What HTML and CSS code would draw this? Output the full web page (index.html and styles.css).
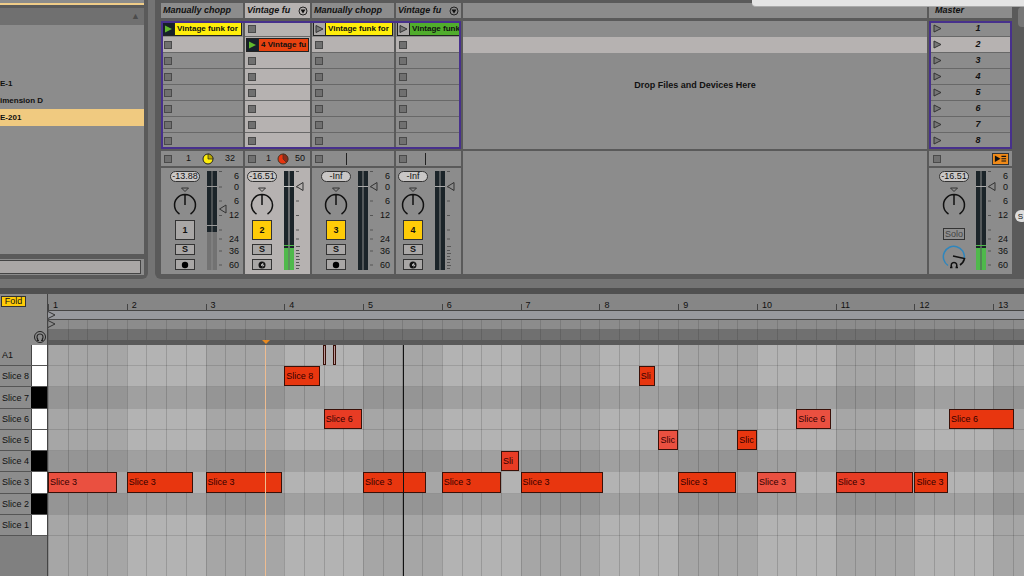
FILE: index.html
```html
<!DOCTYPE html>
<html lang="en">
<head>
  <meta charset="UTF-8" />
  <meta name="viewport" content="width=device-width, initial-scale=1.0" />
  <title>Live Set</title>
  <link rel="stylesheet" href="styles.css">
</head>
<body>
  <!-- Shared icons -->
  <svg class="defs" width="0" height="0" aria-hidden="true">
    <symbol id="play" viewBox="0 0 9 9"><path d="M1 1 L8 4.5 L1 8 Z" /></symbol>
    <symbol id="knob" viewBox="0 0 24 30">
      <path d="M8.5 2 H15.500 L12 5.500 Z" fill="none" stroke="#333" />
      <path d="M6.500 28 A10.500 10.500 0 1 1 17.500 28 M12 19 V9" fill="none" stroke="#111" stroke-width="1.500" />
    </symbol>
    <symbol id="ticks" viewBox="0 0 4 99">
      <path d="M0 .5H3M0 16H3M0 30H3M0 44.500H3M0 59H3M0 68H3M0 80H3M0 94H3" stroke="#555" />
    </symbol>
    <symbol id="ticks-fine" viewBox="0 0 4 99">
      <path d="M0 .5H3M0 16H3M0 30H3M0 44.500H3M0 59H3M0 68H3M0 75.500H4M0 79.500H3M0 82.500H4M0 85.500H3M0 88.500H4M0 91.500H3M0 94.500H4M0 97.500H3" stroke="#555" />
    </symbol>
    <symbol id="midi" viewBox="0 0 8 8">
      <circle cx="4" cy="4" r="3.500" fill="#111" /><path d="M5.500 1.500 L3 3.500 V5 L5 4.500 L4 7 L6.500 4 L5 3.500 Z" fill="#bbb" />
    </symbol>
    <symbol id="phones" viewBox="0 0 14 14">
      <circle cx="7" cy="7" r="5.500" fill="none" stroke="#222" />
      <path d="M5 10 C3 7 4 4 7 4 C10 4 11 7 9 10 M4.500 8 V10.500 H6 M9.500 8 V10.500 H8" fill="none" stroke="#222" stroke-width="1.200" />
    </symbol>
    <symbol id="menu" viewBox="0 0 10 10">
      <circle cx="5" cy="5" r="4" fill="none" stroke="#222" /><path d="M2.500 3.500 H7.500 L5 7.500 Z" fill="#111" />
    </symbol>
  </svg>

  <div class="top">
    <aside class="browser">
      <div class="browser-strip"></div>
      <div class="browser-head">▲</div>
      <ul class="browser-list">
        <li>E-1</li>
        <li>imension D</li>
        <li class="selected">E-201</li>
      </ul>
      <div class="browser-foot"><input type="text" class="browser-input" aria-label="Info" /></div>
    </aside>

    <main class="session">
      <section class="tracks">
        <div class="row heads">
          <div class="head">Manually chopp</div>
          <div class="head light">Vintage fu <svg class="menu"><use href="#menu" /></svg></div>
          <div class="head">Manually chopp</div>
          <div class="head">Vintage fu <svg class="menu"><use href="#menu" /></svg></div>
        </div>

        <div class="row slots">
          <div class="track">
            <button class="slot clip yellow playing"><svg class="play"><use href="#play" /></svg><span>Vintage funk for</span></button>
            <button class="slot scene" aria-label="Stop"><i class="stop"></i></button>
            <button class="slot" aria-label="Stop"><i class="stop"></i></button>
            <button class="slot" aria-label="Stop"><i class="stop"></i></button>
            <button class="slot" aria-label="Stop"><i class="stop"></i></button>
            <button class="slot" aria-label="Stop"><i class="stop"></i></button>
            <button class="slot" aria-label="Stop"><i class="stop"></i></button>
            <button class="slot" aria-label="Stop"><i class="stop"></i></button>
          </div>
          <div class="track light">
            <button class="slot" aria-label="Stop"><i class="stop"></i></button>
            <button class="slot clip red playing"><svg class="play"><use href="#play" /></svg><span>4 Vintage fu</span></button>
            <button class="slot" aria-label="Stop"><i class="stop"></i></button>
            <button class="slot" aria-label="Stop"><i class="stop"></i></button>
            <button class="slot" aria-label="Stop"><i class="stop"></i></button>
            <button class="slot" aria-label="Stop"><i class="stop"></i></button>
            <button class="slot" aria-label="Stop"><i class="stop"></i></button>
            <button class="slot" aria-label="Stop"><i class="stop"></i></button>
          </div>
          <div class="track">
            <button class="slot clip yellow"><svg class="play"><use href="#play" /></svg><span>Vintage funk for</span></button>
            <button class="slot scene" aria-label="Stop"><i class="stop"></i></button>
            <button class="slot" aria-label="Stop"><i class="stop"></i></button>
            <button class="slot" aria-label="Stop"><i class="stop"></i></button>
            <button class="slot" aria-label="Stop"><i class="stop"></i></button>
            <button class="slot" aria-label="Stop"><i class="stop"></i></button>
            <button class="slot" aria-label="Stop"><i class="stop"></i></button>
            <button class="slot" aria-label="Stop"><i class="stop"></i></button>
          </div>
          <div class="track">
            <button class="slot clip green"><svg class="play"><use href="#play" /></svg><span>Vintage funk</span></button>
            <button class="slot scene" aria-label="Stop"><i class="stop"></i></button>
            <button class="slot" aria-label="Stop"><i class="stop"></i></button>
            <button class="slot" aria-label="Stop"><i class="stop"></i></button>
            <button class="slot" aria-label="Stop"><i class="stop"></i></button>
            <button class="slot" aria-label="Stop"><i class="stop"></i></button>
            <button class="slot" aria-label="Stop"><i class="stop"></i></button>
            <button class="slot" aria-label="Stop"><i class="stop"></i></button>
          </div>
        </div>

        <div class="row status">
          <div class="state">
            <i class="stop"></i><span class="count">1</span>
            <svg class="pie" viewBox="0 0 12 12"><circle cx="6" cy="6" r="5" fill="#ffee0a" stroke="#222" /><path d="M6 6 V1 A5 5 0 0 1 11 6 Z" fill="#b9a800" stroke="#222" stroke-width=".7" /></svg>
            <span>32</span>
          </div>
          <div class="state narrow">
            <i class="stop"></i><span class="count">1</span>
            <svg class="pie" viewBox="0 0 12 12"><circle cx="6" cy="6" r="5" fill="#e8340f" stroke="#432" /><path d="M6 6 V1 A5 5 0 0 1 9.500 9.500 Z" fill="#8f2a1a" stroke="#432" stroke-width=".7" /></svg>
            <span>50</span>
          </div>
          <div class="state"><i class="stop"></i><i class="bar-mark"></i></div>
          <div class="state narrow"><i class="stop"></i><i class="bar-mark"></i></div>
        </div>

        <div class="row mixers">
          <div class="mixer">
            <div class="controls">
              <output class="peak">-13.88</output>
              <svg class="knob"><use href="#knob" /></svg>
              <button class="number">1</button>
              <button class="small">S</button>
              <button class="small" aria-label="Arm"><svg viewBox="0 0 8 8"><circle cx="4" cy="4" r="3.200" /></svg></button>
            </div>
            <svg class="meter" viewBox="0 0 22 99">
              <path d="M0 0H4.500V99H0ZM5.500 0H10V99H5.500Z" fill="#727272" />
              <path d="M0 0H4.500V61H0ZM5.500 0H10V61H5.500Z" fill="#1b2429" />
              <path d="M0 15.500H10M0 54.500H10" stroke="#999" />
              <use href="#ticks" x="12" width="4" height="99" />
              <path d="M19 34 V42 L12.500 38 Z" fill="#8b8b8b" stroke="#333" />
            </svg>
            <ul class="scale"><li>6</li><li>0</li><li>6</li><li>12</li><li>24</li><li>36</li><li>60</li></ul>
          </div>

          <div class="mixer narrow light">
            <div class="controls">
              <output class="peak">-16.51</output>
              <svg class="knob"><use href="#knob" /></svg>
              <button class="number on">2</button>
              <button class="small">S</button>
              <button class="small" aria-label="Arm"><svg><use href="#midi" /></svg></button>
            </div>
            <svg class="meter" viewBox="0 0 22 99">
              <path d="M0 0H4.500V99H0ZM5.500 0H10V99H5.500Z" fill="#1b2429" />
              <path d="M0 77H4.500V99H0ZM5.500 77H10V99H5.500Z" fill="#4fb94b" />
              <path d="M0 15.500H10" stroke="#ccc" /><path d="M0 74.500H10" stroke="#4fb94b" />
              <use href="#ticks-fine" x="12" width="4" height="99" />
              <path d="M19 11.500 V19.500 L12.500 15.500 Z" fill="#b5b1b0" stroke="#333" />
            </svg>
          </div>

          <div class="mixer">
            <div class="controls">
              <output class="peak">-Inf</output>
              <svg class="knob"><use href="#knob" /></svg>
              <button class="number on">3</button>
              <button class="small">S</button>
              <button class="small" aria-label="Arm"><svg viewBox="0 0 8 8"><circle cx="4" cy="4" r="3.200" /></svg></button>
            </div>
            <svg class="meter" viewBox="0 0 22 99">
              <path d="M0 0H4.500V99H0ZM5.500 0H10V99H5.500Z" fill="#1b2429" />
              <path d="M0 15.500H10" stroke="#aaa" />
              <use href="#ticks" x="12" width="4" height="99" />
              <path d="M19 11.500 V19.500 L12.500 15.500 Z" fill="#8b8b8b" stroke="#333" />
            </svg>
            <ul class="scale"><li>6</li><li>0</li><li>6</li><li>12</li><li>24</li><li>36</li><li>60</li></ul>
          </div>

          <div class="mixer narrow">
            <div class="controls">
              <output class="peak">-Inf</output>
              <svg class="knob"><use href="#knob" /></svg>
              <button class="number on">4</button>
              <button class="small">S</button>
              <button class="small" aria-label="Arm"><svg><use href="#midi" /></svg></button>
            </div>
            <svg class="meter" viewBox="0 0 22 99">
              <path d="M0 0H4.500V99H0ZM5.500 0H10V99H5.500Z" fill="#1b2429" />
              <path d="M0 15.500H10" stroke="#aaa" />
              <use href="#ticks-fine" x="12" width="4" height="99" />
              <path d="M19 11.500 V19.500 L12.500 15.500 Z" fill="#8b8b8b" stroke="#333" />
            </svg>
          </div>
        </div>
      </section>

      <section class="drop">
        <div class="drop-head"></div>
        <div class="drop-area">Drop Files and Devices Here</div>
        <div class="drop-foot"></div>
      </section>

      <section class="master">
        <div class="head">Master</div>
        <div class="scenes">
          <button class="slot"><svg class="play"><use href="#play" /></svg><span>1</span></button>
          <button class="slot scene"><svg class="play"><use href="#play" /></svg><span>2</span></button>
          <button class="slot"><svg class="play"><use href="#play" /></svg><span>3</span></button>
          <button class="slot"><svg class="play"><use href="#play" /></svg><span>4</span></button>
          <button class="slot"><svg class="play"><use href="#play" /></svg><span>5</span></button>
          <button class="slot"><svg class="play"><use href="#play" /></svg><span>6</span></button>
          <button class="slot"><svg class="play"><use href="#play" /></svg><span>7</span></button>
          <button class="slot"><svg class="play"><use href="#play" /></svg><span>8</span></button>
        </div>
        <div class="state master-state">
          <i class="stop"></i>
          <button class="back" aria-label="Back to Arrangement"><svg viewBox="0 0 16 10"><path d="M2 1.500 L8 5 L2 8.500 Z" fill="#111" /><path d="M9 2.500H14M9 5H14M9 7.500H14" stroke="#111" stroke-width="1.200" /></svg></button>
        </div>
        <div class="mixer">
          <div class="controls">
            <output class="peak">-16.51</output>
            <svg class="knob"><use href="#knob" /></svg>
            <button class="solo">Solo</button>
            <svg class="cue" viewBox="0 0 26 26">
              <path d="M7 21.500 A10.500 10.500 0 1 1 23.300 14" fill="none" stroke="#2f86bd" stroke-width="1.500" />
              <path d="M12 12 L23.500 14.500 A10.500 10.500 0 0 1 19 21" fill="none" stroke="#111" stroke-width="1.600" />
              <path d="M11 24 C7 16.500 19 16.500 15 24 M9 23.500H11.500M14.500 23.500H17" fill="none" stroke="#111" stroke-width="1.500" />
            </svg>
          </div>
          <svg class="meter" viewBox="0 0 22 99">
            <path d="M0 0H4.500V99H0ZM5.500 0H10V99H5.500Z" fill="#1b2429" />
            <path d="M0 77H4.500V99H0ZM5.500 77H10V99H5.500Z" fill="#4fb94b" />
            <path d="M0 15.500H10" stroke="#aaa" /><path d="M0 74.500H10" stroke="#4fb94b" />
            <use href="#ticks" x="12" width="4" height="99" />
            <path d="M19 11.500 V19.500 L12.500 15.500 Z" fill="#8b8b8b" stroke="#333" />
          </svg>
          <ul class="scale"><li>6</li><li>0</li><li>6</li><li>12</li><li>24</li><li>36</li><li>60</li></ul>
        </div>
      </section>

      <div class="side-tab"></div>
      <button class="side-s">S</button>
    </main>
  </div>

  <!-- Clip editor -->
  <section class="editor">
    <div class="keys">
      <div class="keys-head">
        <button class="fold">Fold</button>
        <svg class="phones"><use href="#phones" /></svg>
      </div>
      <ul class="key-list">
        <li class="key">A1</li>
        <li class="key">Slice 8</li>
        <li class="key black">Slice 7</li>
        <li class="key">Slice 6</li>
        <li class="key">Slice 5</li>
        <li class="key black">Slice 4</li>
        <li class="key">Slice 3</li>
        <li class="key black">Slice 2</li>
        <li class="key">Slice 1</li>
      </ul>
    </div>

    <div class="roll">
      <div class="timeline">
        <ol class="ruler">
          <li>1</li><li>2</li><li>3</li><li>4</li><li>5</li><li>6</li><li>7</li><li>8</li><li>9</li><li>10</li><li>11</li><li>12</li><li>13</li>
        </ol>
        <div class="loop"><svg viewBox="0 0 8 8"><path d="M0 .5 L7 4 L0 7.500" /></svg></div>
        <div class="start"><svg viewBox="0 0 8 8"><path d="M0 .5 L7 4 L0 7.500" /></svg></div>
        <div class="scrub"></div>
        <div class="notes">
          <div class="lane">
            <div class="note tiny" style="--at: 3.49; --len: .04"></div>
            <div class="note tiny" style="--at: 3.62; --len: .04"></div>
          </div>
          <div class="lane">
            <div class="note" style="--at: 3; --len: .45">Slice 8</div>
            <div class="note" style="--at: 7.5; --len: .21">Sli</div>
          </div>
          <div class="lane black"></div>
          <div class="lane">
            <div class="note mid" style="--at: 3.5; --len: .49">Slice 6</div>
            <div class="note soft" style="--at: 9.5; --len: .44">Slice 6</div>
            <div class="note" style="--at: 11.44; --len: .82">Slice 6</div>
          </div>
          <div class="lane">
            <div class="note soft" style="--at: 7.75; --len: .25">Slic</div>
            <div class="note" style="--at: 8.75; --len: .25">Slic</div>
          </div>
          <div class="lane black">
            <div class="note mid" style="--at: 5.75; --len: .23">Sli</div>
          </div>
          <div class="lane">
            <div class="note soft" style="--at: 0; --len: .88">Slice 3</div>
            <div class="note" style="--at: 1; --len: .84">Slice 3</div>
            <div class="note" style="--at: 2; --len: .97">Slice 3</div>
            <div class="note" style="--at: 4; --len: .8">Slice 3</div>
            <div class="note" style="--at: 5; --len: .75">Slice 3</div>
            <div class="note" style="--at: 6; --len: 1.04">Slice 3</div>
            <div class="note" style="--at: 8; --len: .74">Slice 3</div>
            <div class="note soft" style="--at: 9; --len: .49">Slice 3</div>
            <div class="note mid" style="--at: 10; --len: .98">Slice 3</div>
            <div class="note" style="--at: 11; --len: .43">Slice 3</div>
          </div>
          <div class="lane black"></div>
          <div class="lane"></div>
          <div class="playhead" style="--at: 2.75"></div>
          <div class="cursor" style="--at: 4.51"></div>
        </div>
      </div>
    </div>
  </section>

  <div class="window-edge"></div>
</body>
</html>
```

FILE: styles.css
```css
:root {
  --frame: #5a5a5a;
  --gutter: #747474;
  --panel: #8c8c8c;
  --light: #b6b2b1;
  --purple: #47308c;
  --yellow: #ffcc08;
  --note: #e8360f;
}
* { box-sizing: border-box; margin: 0; padding: 0; }
body {
  display: flex;
  flex-direction: column;
  min-height: 100vh;
  overflow: hidden;
  background: var(--gutter);
  font: 9px/11px "Liberation Sans", Arial, sans-serif;
  color: #111;
}
ul, ol { list-style: none; }
button { font: inherit; color: inherit; border: none; background: none; }
svg { display: block; flex: none; }
.defs { position: absolute; }

/* Top half */
.top { display: flex; gap: 7px; padding-bottom: 9px; }

.browser {
  display: flex; flex-direction: column;
  width: 148px; flex: none;
  background: var(--frame);
  border-right: 4px solid var(--frame);
  border-bottom: 4px solid var(--frame);
  border-radius: 0 0 6px 0;
  font-size: 8px; font-weight: bold;
}
.browser-strip { height: 5px; background: var(--panel); border-bottom: 2px solid #f0cd88; }
.browser-head {
  height: 17px; margin-top: 3px; padding-right: 4px;
  background: #707070; color: #4c4c4c;
  font-size: 9px; line-height: 17px; text-align: right;
}
.browser-list { flex: 1; padding-top: 50px; background: var(--panel); line-height: 17px; }
.browser-list .selected { background: #f0ca80; }
.browser-foot { margin-top: 5px; padding: 1px 3px 1px 0; background: var(--panel); }
.browser-input { display: block; width: 100%; height: 14px; background: #aaa7a6; border: 1px solid #444; border-left: none; }

.session {
  position: relative;
  flex: 1; min-width: 0;
  display: flex; gap: 2px;
  padding: 3px 12px 5px 6px;
  background: var(--frame);
  border-radius: 0 0 0 6px;
}
.tracks, .drop, .master { display: flex; flex-direction: column; }
.row { display: grid; grid-template-columns: 82px 65px 82px 65px; gap: 2px; }

.head {
  display: flex; align-items: center; justify-content: space-between;
  height: 15px; padding: 0 2px;
  background: var(--panel);
  font-weight: bold; font-style: italic;
  white-space: nowrap; overflow: hidden;
}
.light { background: var(--light); }
.menu { width: 10px; height: 10px; }

.slots, .scenes { margin-top: 3px; outline: 2px solid var(--purple); outline-offset: -2px; }
.track, .scenes { display: grid; grid-auto-rows: 16px; min-width: 0; }
.track, .scenes { background-color: var(--panel); }
.track.light { background-color: var(--light); }
.slot {
  display: flex; align-items: center;
  min-width: 0; padding-left: 3px;
  border-bottom: 1px solid #686868;
  overflow: hidden;
}
.slot.scene { background: var(--light); }
.stop { flex: none; width: 8px; height: 8px; background: #707070; border: 1px solid #4a4a4a; }
.play { width: 9px; height: 9px; fill: #777; stroke: #333; }
.clip {
  margin: 1px 1px 1px 1px; padding: 0;
  border: 1px solid #222;
  font-size: 8px; font-weight: bold; white-space: nowrap;
}
.clip .play { width: 12px; height: 12px; padding: 1px; background: #aaa7a6; border-right: 1px solid #222; }
.clip.playing .play { background: #17202a; fill: #62b82c; stroke: none; }
.clip span { flex: 1; min-width: 0; padding-left: 2px; line-height: 12px; text-align: left; overflow: hidden; }
.yellow span { background: #ffee0a; }
.red span { background: #e8420f; }
.green span { background: #50ad2c; }

.status { margin-top: 2px; }
.state { display: flex; align-items: center; gap: 11px; height: 15px; padding-left: 3px; background: var(--panel); }
.state.narrow { gap: 6px; }
.count { width: 19px; margin-left: -11px; text-align: right; }
.narrow .count { width: 15px; margin-left: -6px; }
.pie { width: 12px; height: 12px; }
.bar-mark { width: 1px; height: 12px; margin-left: 12px; background: #222; }

.mixers { margin-top: 2px; }
.mixer { display: flex; height: 106px; padding: 3px 4px 3px 9px; background: var(--panel); }
.mixer.narrow { padding-left: 2px; }
.mixer.light { background: var(--light); }
.controls { display: flex; flex-direction: column; align-items: center; gap: 4px; width: 31px; margin-right: 7px; }
.peak { width: 100%; height: 11px; background: #c9c7c6; border: 1px solid #333; border-radius: 6px; line-height: 9px; text-align: center; }
.knob { width: 24px; height: 30px; }
.number, .small, .solo { width: 20px; border: 1px solid #333; background: #a9a7a6; font-weight: bold; }
.number { height: 20px; }
.number.on { background: var(--yellow); }
.small { display: flex; align-items: center; justify-content: center; height: 11px; line-height: 9px; }
.small svg { width: 8px; height: 8px; }
.meter { width: 22px; height: 99px; }
.scale { flex: 1; text-align: right; }
.scale li:nth-child(3), .scale li:nth-child(4), .scale li:nth-child(7) { margin-top: 3px; }
.scale li:nth-child(5) { margin-top: 13px; }
.scale li:nth-child(6) { margin-top: 1px; }

.drop { flex: 1; min-width: 0; }
.drop-head { height: 15px; background: var(--panel); }
.drop-area {
  display: flex; align-items: center; justify-content: center;
  height: 128px; margin-top: 3px;
  background: linear-gradient(var(--panel) 16px, var(--light) 16px 32px, var(--panel) 32px);
  font-weight: bold;
}
.drop-foot { flex: 1; margin-top: 2px; background: var(--panel); }

.master { width: 83px; }
.master .head { padding-left: 6px; }
.master .mixer { padding-left: 10px; }
.scenes .slot { padding-left: 4px; font-weight: bold; font-style: italic; }
.scenes .slot span { flex: 1; padding-left: 2px; }
.master-state { justify-content: space-between; margin: 2px 0; padding: 0 3px 0 4px; }
.back { width: 17px; height: 12px; background: #f08a18; border: 1px solid #333; }
.solo { width: 22px; height: 12px; margin-top: 8px; background: #8f8f8f; color: #444; font-weight: normal; line-height: 10px; }
.cue { width: 26px; height: 26px; }

.side-tab { position: absolute; top: 7px; right: 0; width: 6px; height: 20px; background: #777; border-radius: 4px 0 0 4px; }
.side-s { position: absolute; top: 210px; right: -4px; width: 13px; height: 12px; padding-right: 2px; background: #ddd; border-radius: 6px; font-size: 8px; }

/* Clip editor */
.editor { flex: 1; display: flex; border-top: 6px solid #505050; background: #808080; }
.keys { width: 48px; flex: none; background: #808080; border-right: 1px solid #444; }
.keys-head {
  display: flex; flex-direction: column; justify-content: space-between; align-items: flex-start;
  height: 51px; padding: 2px 0 1px 1px;
  background: var(--panel);
}
.fold { width: 25px; height: 11px; background: var(--yellow); border: 1px solid #333; line-height: 9px; }
.phones { width: 14px; height: 14px; align-self: flex-end; }
.key-list, .notes { display: grid; grid-template-rows: repeat(9, calc(191px / 9)); }
.key {
  display: flex; align-items: center;
  padding: 1px 0 0 2px;
  background: linear-gradient(90deg, var(--panel) 31px, #444 31px 32px, #fff 32px);
  border-bottom: 1px solid #555;
}
.key.black { background: linear-gradient(90deg, var(--panel) 31px, #000 31px); }

.roll { flex: 1; min-width: 0; display: flex; overflow: hidden; }
/* 13 bars span the window width, the last one runs off screen */
.timeline { display: flex; flex-direction: column; width: 100vw; flex: none; }
.ruler { display: grid; grid-template-columns: repeat(13, 1fr); height: 17px; background: #868686; border-bottom: 1px solid #444; }
.ruler li { padding: 6px 0 0 5px; line-height: 10px; background: linear-gradient(#444, #444) 0 100% / 1px 6px no-repeat; }
.loop, .start, .scrub {
  --beats: repeating-linear-gradient(90deg, rgba(0,0,0,.12) 0 1px, transparent 1px calc(100% / 52));
}
.loop { height: 9px; background: #97999e; border-bottom: 1px solid #4a4a4a; }
.start { height: 9px; background: var(--beats), #8c8c8c; }
.loop svg, .start svg { width: 8px; height: 8px; fill: none; stroke: #333; }
.scrub { height: 16px; background: var(--beats), #707070; border-bottom: 5px solid #5a5a5a; }
.notes {
  position: relative;
  flex: 1;
  background:
    repeating-linear-gradient(90deg, rgba(0,0,0,.15) 0 1px, transparent 1px calc(100% / 52)),
    repeating-linear-gradient(90deg, #a6a6a6 0 calc(100% / 13), #b3b3b3 calc(100% / 13) calc(200% / 13));
}
.lane { position: relative; border-bottom: 1px solid rgba(0,0,0,.12); }
.lane.black { background: rgba(0,0,0,.1); border-color: transparent; }
.note {
  position: absolute;
  top: 0; bottom: 0;
  left: calc(var(--at) * 100% / 13);
  width: calc(var(--len) * 100% / 13);
  padding-left: 1px;
  background: var(--note);
  border: 1px solid #3a1008;
  color: #300;
  line-height: 19px;
  white-space: nowrap; overflow: hidden;
}
.note.mid { background: #e83c24; }
.note.soft { background: #ea5040; }
.note.tiny { padding: 0; background: #b99; }
.playhead, .cursor { position: absolute; top: 0; bottom: 0; left: calc(var(--at) * 100% / 13); width: 1px; }
.playhead { background: #eebc90; }
.playhead::before { content: ""; position: absolute; top: -5px; left: -3px; border: 4px solid transparent; border-top-color: #e88a20; border-bottom: 0; }
.cursor { background: #111; }

/* Edge of the window lying over the set */
.window-edge { position: absolute; top: 0; right: 0; width: 272px; height: 7px; background: #e4e4e4; border-bottom: 1px solid #aaa; border-radius: 0 0 0 4px; }
```
